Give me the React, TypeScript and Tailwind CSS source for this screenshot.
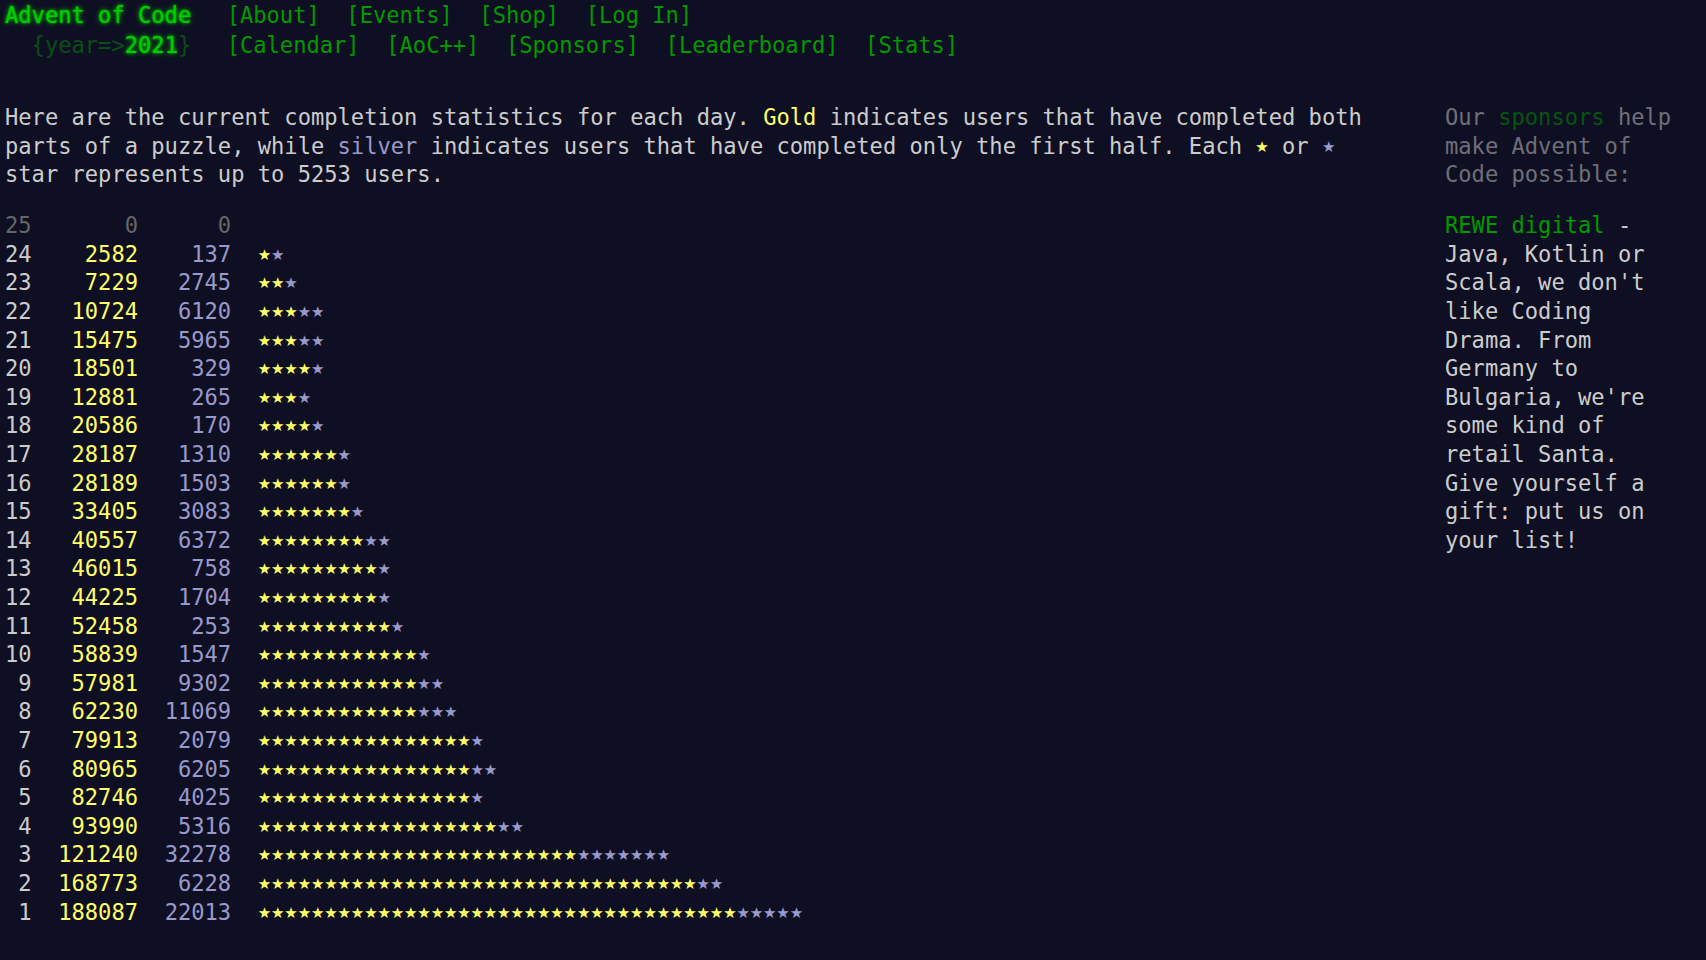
import React from "react";

const rows: [number, number, number][] = [
  [25, 0, 0],
  [24, 2582, 137],
  [23, 7229, 2745],
  [22, 10724, 6120],
  [21, 15475, 5965],
  [20, 18501, 329],
  [19, 12881, 265],
  [18, 20586, 170],
  [17, 28187, 1310],
  [16, 28189, 1503],
  [15, 33405, 3083],
  [14, 40557, 6372],
  [13, 46015, 758],
  [12, 44225, 1704],
  [11, 52458, 253],
  [10, 58839, 1547],
  [9, 57981, 9302],
  [8, 62230, 11069],
  [7, 79913, 2079],
  [6, 80965, 6205],
  [5, 82746, 4025],
  [4, 93990, 5316],
  [3, 121240, 32278],
  [2, 168773, 6228],
  [1, 188087, 22013],
];

const PER = 5253;

function Star({ gold }: { gold: boolean }) {
  return (
    <span
      className={`inline-block w-[13.3px] text-center text-[15px] leading-none align-[2px] font-['DejaVu_Sans',sans-serif] ${
        gold ? "text-[#ffff66]" : "text-[#9999cc]"
      }`}
    >
      ★
    </span>
  );
}

function NavItem({ children }: { children: React.ReactNode }) {
  return <span className="inline-block px-[13.3px] text-[#009900]">{children}</span>;
}

export default function App() {
  return (
    <div className="min-h-[960px] w-full bg-[#0f0f23] text-[#cccccc] font-['DejaVu_Sans_Mono',monospace] text-[22.1px] leading-[28.6px] pl-[5px] whitespace-nowrap">
      <header>
        <div className="h-[30px] leading-[30px]">
          <span className="inline-block mr-[22.1px] text-[#00cc00] [text-shadow:0_0_2px_#00cc00,0_0_5px_#00cc00]">
            Advent of Code
          </span>
          <NavItem>[About]</NavItem>
          <NavItem>[Events]</NavItem>
          <NavItem>[Shop]</NavItem>
          <NavItem>[Log In]</NavItem>
        </div>
        <div className="h-[30px] leading-[30px]">
          <span className="inline-block mr-[22.1px] whitespace-pre text-[#00cc00]">
            {"  "}
            <span className="opacity-[0.33]">{"{year=>"}</span>
            <span className="[text-shadow:0_0_2px_#00cc00,0_0_5px_#00cc00]">2021</span>
            <span className="opacity-[0.33]">{"}"}</span>
          </span>
          <NavItem>[Calendar]</NavItem>
          <NavItem>[AoC++]</NavItem>
          <NavItem>[Sponsors]</NavItem>
          <NavItem>[Leaderboard]</NavItem>
          <NavItem>[Stats]</NavItem>
        </div>
      </header>

      <div className="flex mt-[43px] gap-[60px]">
        <main className="w-[1380px] shrink-0">
          <p className="whitespace-normal mb-[22.5px]">
            Here are the current completion statistics for each day.{" "}
            <span className="text-[#ffff66]">Gold</span> indicates users that have completed both parts of a
            puzzle, while <span className="text-[#9999cc]">silver</span> indicates users that have completed
            only the first half. Each <Star gold /> or <Star gold={false} /> star represents up to 5253 users.
          </p>
          <div>
            {rows.map(([day, gold, silver]) => {
              const inactive = gold === 0 && silver === 0;
              const g = Math.ceil(gold / PER);
              const s = Math.ceil(silver / PER);
              return (
                <div key={day} className="h-[28.6px] whitespace-pre">
                  {inactive ? (
                    <span className="text-[#666666]">
                      {String(day).padStart(2, " ")}
                      {"  "}
                      {String(gold).padStart(6, " ")}
                      {" "}
                      {String(silver).padStart(6, " ")}
                    </span>
                  ) : (
                    <>
                      <span>{String(day).padStart(2, " ")}</span>
                      {"  "}
                      <span className="text-[#ffff66]">{String(gold).padStart(6, " ")}</span>
                      {" "}
                      <span className="text-[#9999cc]">{String(silver).padStart(6, " ")}</span>
                      {"  "}
                      {Array.from({ length: g }).map((_, i) => (
                        <Star key={"g" + i} gold />
                      ))}
                      {Array.from({ length: s }).map((_, i) => (
                        <Star key={"s" + i} gold={false} />
                      ))}
                    </>
                  )}
                </div>
              );
            })}
          </div>
        </main>
        <aside className="w-[232px] shrink-0 whitespace-normal">
          <p className="opacity-50 mb-[22.5px]">
            Our <span className="text-[#009900]">sponsors</span> help make Advent of Code possible:
          </p>
          <p>
            <span className="text-[#009900]">REWE digital</span> - Java, Kotlin or Scala, we don't like Coding
            Drama. From Germany to Bulgaria, we're some kind of retail Santa. Give yourself a gift: put us on
            your list!
          </p>
        </aside>
      </div>
    </div>
  );
}
